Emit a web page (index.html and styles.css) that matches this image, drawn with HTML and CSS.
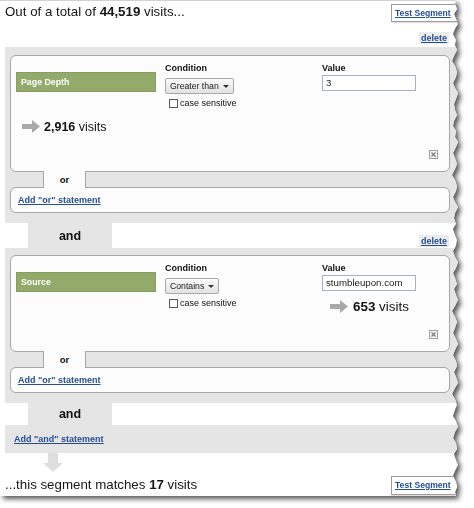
FILE: index.html
```html
<!DOCTYPE html>
<html>
<head>
<meta charset="utf-8">
<link rel="stylesheet" href="styles.css">
</head>
<body>
<div class="shot">
  <div class="page">
    <div class="head">
      <div class="title">Out of a total of <b>44,519</b> visits...</div>
      <div class="test-btn"><a href="#">Test Segment</a></div>
    </div>
    <div class="del-row"><a class="del" href="#">delete</a></div>

    <div class="band band--first">
      <div class="card">
        <div class="cond">
          <div class="dim">Page Depth</div>
          <div class="col col--op">
            <div class="lbl">Condition</div>
            <div class="sel">Greater than <span class="caret"></span></div>
            <div class="cs"><span class="box"></span>case sensitive</div>
          </div>
          <div class="col">
            <div class="lbl">Value</div>
            <div class="inp">3</div>
          </div>
        </div>
        <div class="res res--left">
          <svg width="18" height="13" viewBox="0 0 18 13"><path d="M0 4h10V0l8 6.5-8 6.5V9H0z" fill="#a9a9a9"/></svg>
          <span><b>2,916</b> visits</span>
        </div>
        <div class="foot">
          <svg width="9" height="9" viewBox="0 0 9 9"><rect x=".5" y=".5" width="8" height="8" fill="#f2f2f2" stroke="#a0a0a0"/><path d="M2.5 2.5l4 4M6.5 2.5l-4 4" stroke="#7a7a7a" stroke-width="1.1"/></svg>
        </div>
      </div>
      <div class="or-row"><div class="or-tab">or</div></div>
      <div class="add-card"><a class="lnk" href="#">Add "or" statement</a></div>
    </div>

    <div class="and-row"><div class="and-tab">and</div><a class="del" href="#">delete</a></div>

    <div class="band">
      <div class="card">
        <div class="cond">
          <div class="dim">Source</div>
          <div class="col col--op">
            <div class="lbl">Condition</div>
            <div class="sel">Contains <span class="caret"></span></div>
            <div class="cs"><span class="box"></span>case sensitive</div>
          </div>
          <div class="col">
            <div class="lbl">Value</div>
            <div class="inp">stumbleupon.com</div>
            <div class="res res--right">
              <svg width="18" height="13" viewBox="0 0 18 13"><path d="M0 4h10V0l8 6.5-8 6.5V9H0z" fill="#a9a9a9"/></svg>
              <span><b>653</b> visits</span>
            </div>
          </div>
        </div>
        <div class="foot">
          <svg width="9" height="9" viewBox="0 0 9 9"><rect x=".5" y=".5" width="8" height="8" fill="#f2f2f2" stroke="#a0a0a0"/><path d="M2.5 2.5l4 4M6.5 2.5l-4 4" stroke="#7a7a7a" stroke-width="1.1"/></svg>
        </div>
      </div>
      <div class="or-row"><div class="or-tab">or</div></div>
      <div class="add-card"><a class="lnk" href="#">Add "or" statement</a></div>
    </div>

    <div class="and-row and-row--short"><div class="and-tab">and</div></div>

    <div class="band-and"><a class="lnk" href="#">Add "and" statement</a></div>

    <svg class="down" width="20" height="19" viewBox="0 0 20 19"><path d="M5 0h10v10h5l-10 9L0 10h5z" fill="#dedede"/></svg>

    <div class="bottom">
      <div class="title">...this segment matches <b>17</b> visits</div>
      <div class="test-btn test-btn--low"><a href="#">Test Segment</a></div>
    </div>
  </div>
</div>
</body>
</html>
```

FILE: styles.css
```css
* { box-sizing: border-box; }
html, body { margin: 0; padding: 0; background: #fff; }
body {
  font-family: "Liberation Sans", Arial, sans-serif;
  color: #111;
  width: 474px;
  height: 508px;
  overflow: hidden;
}
a { color: #264f94; text-decoration: underline; }

.shot {
  width: 466px;
  filter: drop-shadow(3px 3px 2.5px rgba(0,0,0,0.65));
}
.page {
  width: 462px;
  height: 496px;
  background: #fff;
  border-top: 1px solid #d2d2d2;
  padding-left: 5px;
  clip-path: polygon(0 0, 456px 0, 455px 4px, 457px 9px, 454px 14px, 456px 19px, 458px 24px, 455px 29px, 453px 34px, 456px 40px, 455px 45px, 457px 50px, 454px 56px, 452px 61px, 455px 66px, 457px 72px, 456px 77px, 453px 83px, 455px 88px, 458px 93px, 456px 99px, 454px 104px, 455px 110px, 457px 115px, 454px 121px, 453px 126px, 456px 131px, 455px 137px, 458px 142px, 456px 147px, 453px 153px, 455px 158px, 457px 164px, 455px 169px, 452px 175px, 455px 180px, 457px 186px, 456px 191px, 453px 197px, 455px 202px, 458px 207px, 455px 213px, 454px 218px, 456px 224px, 453px 229px, 455px 235px, 457px 240px, 456px 246px, 453px 251px, 455px 257px, 458px 262px, 456px 268px, 453px 273px, 455px 278px, 457px 284px, 454px 289px, 456px 295px, 458px 300px, 455px 306px, 452px 311px, 455px 317px, 457px 322px, 455px 328px, 453px 333px, 456px 339px, 458px 344px, 455px 350px, 453px 355px, 456px 361px, 457px 366px, 454px 372px, 456px 377px, 458px 383px, 455px 388px, 452px 394px, 455px 399px, 457px 405px, 455px 410px, 453px 416px, 456px 421px, 458px 427px, 455px 432px, 453px 438px, 456px 443px, 457px 449px, 454px 454px, 456px 460px, 458px 465px, 455px 471px, 453px 476px, 456px 482px, 457px 487px, 455px 492px, 456px 496px, 0 496px);
}

.head {
  display: flex;
  justify-content: space-between;
  align-items: flex-start;
  height: 21px;
  padding-top: 3px;
}
.title { font-size: 13.3px; line-height: 16px; color: #161616; }
.test-btn {
  width: 68px;
  height: 18px;
  margin-right: 3px;
  padding-left: 3px;
  border: 1px solid #9c9c9c;
  background: #fff;
  box-shadow: 1px 1px 1px rgba(0,0,0,0.12);
  font-size: 8.6px;
  font-weight: bold;
  line-height: 16px;
}
.test-btn--low { height: 19px; margin-top: 4px; line-height: 17px; }

.del-row {
  height: 25px;
  display: flex;
  justify-content: flex-end;
  align-items: flex-end;
  padding-right: 13px;
  padding-bottom: 3px;
}
.del {
  font-size: 9px;
  font-weight: bold;
  line-height: 10px;
  padding: 1px 2px;
  background: #ececec;
}

.band {
  background: #e5e5e5;
  padding: 7px 12px 10px 5px;
}
.band--first { padding-top: 8px; }

.card {
  background: #fcfcfc;
  border: 1px solid #a6a6a6;
  border-radius: 6px;
  padding: 7px 11px 12px 5px;
}
.cond { display: flex; align-items: flex-start; }
.dim {
  width: 140px;
  height: 20px;
  margin-top: 9px;
  background: #93aa6b;
  border: 1px solid #869e5f;
  color: #fff;
  font-size: 8.8px;
  font-weight: bold;
  line-height: 18px;
  padding-left: 4px;
}
.col--op { width: 157px; margin-left: 9px; }
.lbl {
  font-size: 9px;
  font-weight: bold;
  line-height: 10px;
  height: 10px;
  margin-bottom: 2px;
}
.sel {
  display: inline-flex;
  align-items: center;
  gap: 4px;
  height: 16px;
  padding: 0 4px;
  border: 1px solid #a9a9a9;
  border-radius: 2px;
  background: linear-gradient(#fbfbfb, #e2e2e2);
  font-size: 8.7px;
  color: #1a1a1a;
}
.caret {
  width: 0;
  height: 0;
  border-left: 3px solid transparent;
  border-right: 3px solid transparent;
  border-top: 3px solid #333;
}
.cs {
  display: flex;
  align-items: center;
  height: 9px;
  margin-top: 5px;
  margin-left: 4px;
  font-size: 9px;
  line-height: 9px;
}
.box {
  width: 9px;
  height: 9px;
  margin-right: 2px;
  border: 1px solid #555;
  background: #fff;
}
.inp {
  width: 94px;
  height: 16px;
  border: 1px solid #a3b1c6;
  background: #fff;
  font-size: 9.7px;
  line-height: 14px;
  padding-left: 3px;
  color: #1a1a1a;
}

.res { display: flex; align-items: center; height: 15px; color: #111; }
.res--left { margin-top: 11px; margin-left: 6px; gap: 4px; font-size: 12.5px; }
.res--right { margin-top: 8px; margin-left: 8px; gap: 5px; font-size: 13.4px; }
.res svg { display: block; }

.foot { display: flex; justify-content: flex-end; height: 9px; margin-top: 16px; }
.foot svg { display: block; }

.or-row { display: flex; height: 15px; padding-left: 33px; }
.or-tab {
  position: relative;
  z-index: 1;
  width: 43px;
  height: 17px;
  margin-top: -1px;
  background: #fcfcfc;
  border-left: 1px solid #a6a6a6;
  border-right: 1px solid #a6a6a6;
  display: flex;
  align-items: center;
  justify-content: center;
  font-size: 9.5px;
  font-weight: bold;
}
.add-card {
  height: 26px;
  display: flex;
  align-items: center;
  padding-left: 7px;
  background: #fcfcfc;
  border: 1px solid #a6a6a6;
  border-radius: 6px;
}
.lnk { font-size: 9px; font-weight: bold; }

.and-row {
  display: flex;
  justify-content: space-between;
  align-items: flex-end;
  height: 25px;
  padding-right: 13px;
  padding-bottom: 1px;
}
.and-row--short { height: 22px; }
.and-tab {
  align-self: stretch;
  width: 84px;
  margin-left: 23px;
  margin-bottom: -1px;
  background: #e5e5e5;
  display: flex;
  align-items: center;
  justify-content: center;
  font-size: 12.5px;
  font-weight: bold;
}

.band-and {
  height: 28px;
  display: flex;
  align-items: center;
  padding-left: 9px;
  background: #e5e5e5;
}
.down { display: block; margin-left: 38px; }

.bottom {
  display: flex;
  justify-content: space-between;
  align-items: flex-start;
  height: 26px;
}
.bottom .title { margin-top: 5px; }
```
